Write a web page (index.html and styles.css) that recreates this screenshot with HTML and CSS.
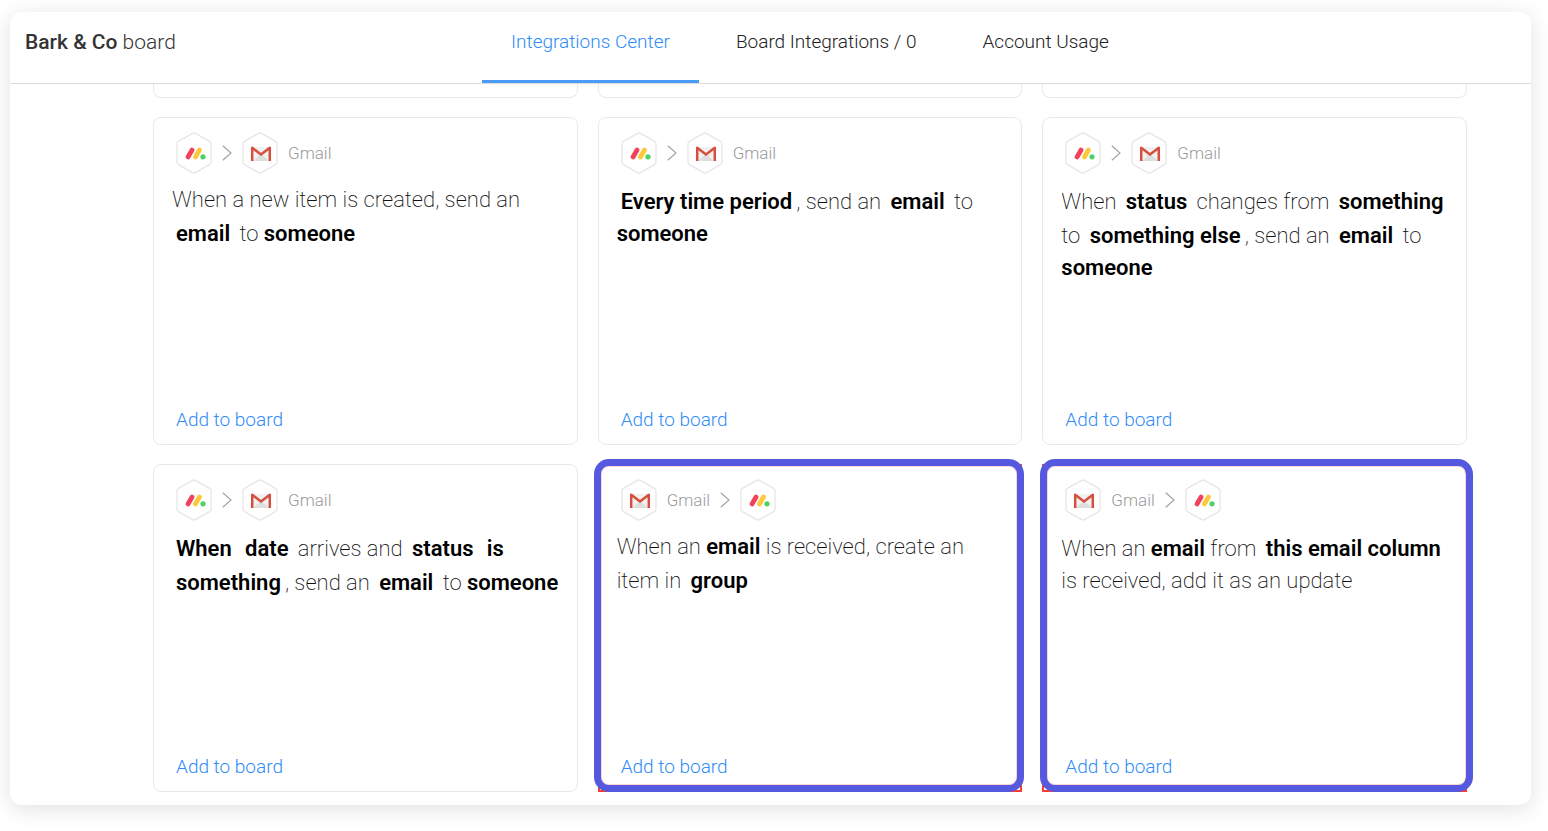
FILE: index.html
```html
<!DOCTYPE html>
<html lang="en">
<head>
  <meta charset="UTF-8">
  <title>Integrations Center - Bark &amp; Co board</title>
  <meta name="viewport" content="width=device-width, initial-scale=1.0">
  <link rel="stylesheet" href="styles.css">
</head>
<body>

  <!-- Shared icons -->
  <svg class="sprite" aria-hidden="true">
    <symbol id="icon-monday" viewBox="0 0 36 42">
      <path class="hex" d="M16.5 1.4 Q18 .6 19.5 1.4 L33.5 9.4 Q35 10.3 35 12 V30 Q35 31.7 33.5 32.6 L19.5 40.6 Q18 41.4 16.5 40.6 L2.5 32.6 Q1 31.7 1 30 V12 Q1 10.3 2.5 9.4 Z"/>
      <path d="M12 24.9 L16.1 18.1" stroke="#f2415a" stroke-width="4.8" stroke-linecap="round"/>
      <path d="M19.4 24.9 L23.5 18.1" stroke="#fdc93a" stroke-width="4.8" stroke-linecap="round"/>
      <circle cx="27" cy="24.8" r="2.6" fill="#4bd262"/>
    </symbol>
    <symbol id="icon-gmail" viewBox="0 0 36 42">
      <path class="hex" d="M16.5 1.4 Q18 .6 19.5 1.4 L33.5 9.4 Q35 10.3 35 12 V30 Q35 31.7 33.5 32.6 L19.5 40.6 Q18 41.4 16.5 40.6 L2.5 32.6 Q1 31.7 1 30 V12 Q1 10.3 2.5 9.4 Z"/>
      <path d="M10 15 H28 V29 H10 Z" fill="#f1f1f1"/>
      <path d="M11 29 L19 22 L27 29 Z" fill="#dedede"/>
      <path d="M10.2 29 V15.8 L19 22.6 L27.8 15.8 V29" fill="none" stroke="#d6503f" stroke-width="2.5" stroke-linejoin="round"/>
    </symbol>
    <symbol id="icon-arrow" viewBox="0 0 10 16">
      <path d="M.8 .8 L9 8 L.8 15.2" fill="none" stroke="#a5a5a5" stroke-width="1.2"/>
    </symbol>
  </svg>

  <div class="panel">
    <header>
      <h1><strong>Bark &amp; Co</strong> board</h1>
      <nav>
        <a href="#center" class="tab active">Integrations Center</a>
        <a href="#board" class="tab">Board Integrations / 0</a>
        <a href="#usage" class="tab">Account Usage</a>
      </nav>
    </header>

    <main>
      <!-- Tail of the previous row, scrolled under the header -->
      <div class="card-end"></div>
      <div class="card-end"></div>
      <div class="card-end"></div>

      <article class="card">
        <div class="apps">
          <svg class="app"><use href="#icon-monday"/></svg>
          <svg class="arrow"><use href="#icon-arrow"/></svg>
          <svg class="app"><use href="#icon-gmail"/></svg>
          <span>Gmail</span>
        </div>
        <p>When a new item is created, send an <b class="field">email</b> to <b>someone</b></p>
        <button type="button">Add to board</button>
      </article>

      <article class="card">
        <div class="apps">
          <svg class="app"><use href="#icon-monday"/></svg>
          <svg class="arrow"><use href="#icon-arrow"/></svg>
          <svg class="app"><use href="#icon-gmail"/></svg>
          <span>Gmail</span>
        </div>
        <p><b class="field">Every time period</b>, send an <b class="field">email</b> to <b>someone</b></p>
        <button type="button">Add to board</button>
      </article>

      <article class="card">
        <div class="apps">
          <svg class="app"><use href="#icon-monday"/></svg>
          <svg class="arrow"><use href="#icon-arrow"/></svg>
          <svg class="app"><use href="#icon-gmail"/></svg>
          <span>Gmail</span>
        </div>
        <p>When <b class="field">status</b> changes from <b class="field">something</b> to <b class="field">something else</b>, send an <b class="field">email</b> to <b>someone</b></p>
        <button type="button">Add to board</button>
      </article>

      <article class="card">
        <div class="apps">
          <svg class="app"><use href="#icon-monday"/></svg>
          <svg class="arrow"><use href="#icon-arrow"/></svg>
          <svg class="app"><use href="#icon-gmail"/></svg>
          <span>Gmail</span>
        </div>
        <p><b class="field">When</b> <b class="field">date</b> arrives and <b class="field">status</b> <b class="field">is</b> <b class="field">something</b>, send an <b class="field">email</b> to <b>someone</b></p>
        <button type="button">Add to board</button>
      </article>

      <article class="card marked">
        <div class="apps">
          <svg class="app"><use href="#icon-gmail"/></svg>
          <span>Gmail</span>
          <svg class="arrow"><use href="#icon-arrow"/></svg>
          <svg class="app"><use href="#icon-monday"/></svg>
        </div>
        <p>When an <b>email</b> is received, create an item in <b class="field">group</b></p>
        <button type="button">Add to board</button>
      </article>

      <article class="card marked marked-last">
        <div class="apps">
          <svg class="app"><use href="#icon-gmail"/></svg>
          <span>Gmail</span>
          <svg class="arrow"><use href="#icon-arrow"/></svg>
          <svg class="app"><use href="#icon-monday"/></svg>
        </div>
        <p>When an <b>email</b> from <b class="field">this email column</b> is received, add it as an update</p>
        <button type="button">Add to board</button>
      </article>
    </main>
  </div>

</body>
</html>
```
FILE: styles.css
```css
* {
  box-sizing: border-box;
}

body {
  font-family: Roboto, "Liberation Sans", sans-serif;
  margin: 0;
  padding: 12px 17px 26px 10px;
  background-color: #fff;
}

.sprite {
  position: absolute;
  width: 0;
  height: 0;
}

.panel {
  background-color: #fff;
  border-radius: 12px;
  box-shadow: 0 4px 22px rgba(0,0,0,0.12);
  padding-bottom: 13px;
}

header {
  display: flex;
  height: 72px;
  border-bottom: 1px solid #dcdcdc;
}

h1 {
  flex: 0 0 472px;
  margin: 0;
  padding-left: 15px;
  font-size: 21px;
  line-height: 60px;
  font-weight: 300;
  color: #333;
}

h1 strong {
  font-weight: 500;
}

nav {
  display: flex;
  gap: 8px;
}

.tab {
  padding: 0 29px;
  font-size: 19px;
  line-height: 60px;
  font-weight: 300;
  color: #222;
  text-decoration: none;
  white-space: nowrap;
}

.tab.active {
  color: #2f8cf8;
  border-bottom: 3px solid #4a9cf6;
}

main {
  display: grid;
  grid-template-columns: repeat(3, 1fr);
  gap: 19px 20px;
  padding: 0 64px 0 143px;
}

.card-end {
  height: 14px;
  border: 1px solid #e8e8ee;
  border-top: none;
  border-radius: 0 0 8px 8px;
}

.card {
  position: relative;
  display: flex;
  flex-direction: column;
  min-height: 328px;
  padding: 14px 12px 11px 18px;
  border: 1px solid #e8e8ee;
  border-radius: 8px;
}

.apps {
  display: flex;
  align-items: center;
  gap: 10px;
  padding-left: 4px;
  font-size: 17px;
  line-height: 42px;
  font-weight: 300;
  color: #999;
}

.app {
  width: 36px;
  height: 42px;
}

.hex {
  fill: #fff;
  stroke: #e6e6e6;
  stroke-width: 1.3;
}

.arrow {
  width: 10px;
  height: 16px;
}

.card p {
  margin: 10px 0 0;
  font-size: 22px;
  line-height: 32px;
  font-weight: 200;
  color: #111;
}

.card b {
  font-weight: 600;
  color: #000;
}

.card .field {
  display: inline-block;
  margin: 2px 4px 0;
}

.card button {
  align-self: flex-start;
  margin-top: auto;
  padding: 0 4px;
  border: none;
  background: none;
  font-family: inherit;
  font-size: 19px;
  line-height: 26px;
  font-weight: 300;
  color: #2f8cf8;
  cursor: pointer;
}

/* Highlighted recipes */
.marked {
  border-color: #ff3b30;
  border-radius: 0;
  box-shadow: inset 0 0 0 1px #ff3b30;
}

.marked::after {
  content: "";
  position: absolute;
  inset: -6px -3px -1px -5px;
  border: 7px solid #5559df;
  border-radius: 15px;
  box-shadow: inset 0 0 0 1px #ffd6d3;
  pointer-events: none;
}

.marked-last::after {
  inset: -6px -7px -1px -3px;
}
```
